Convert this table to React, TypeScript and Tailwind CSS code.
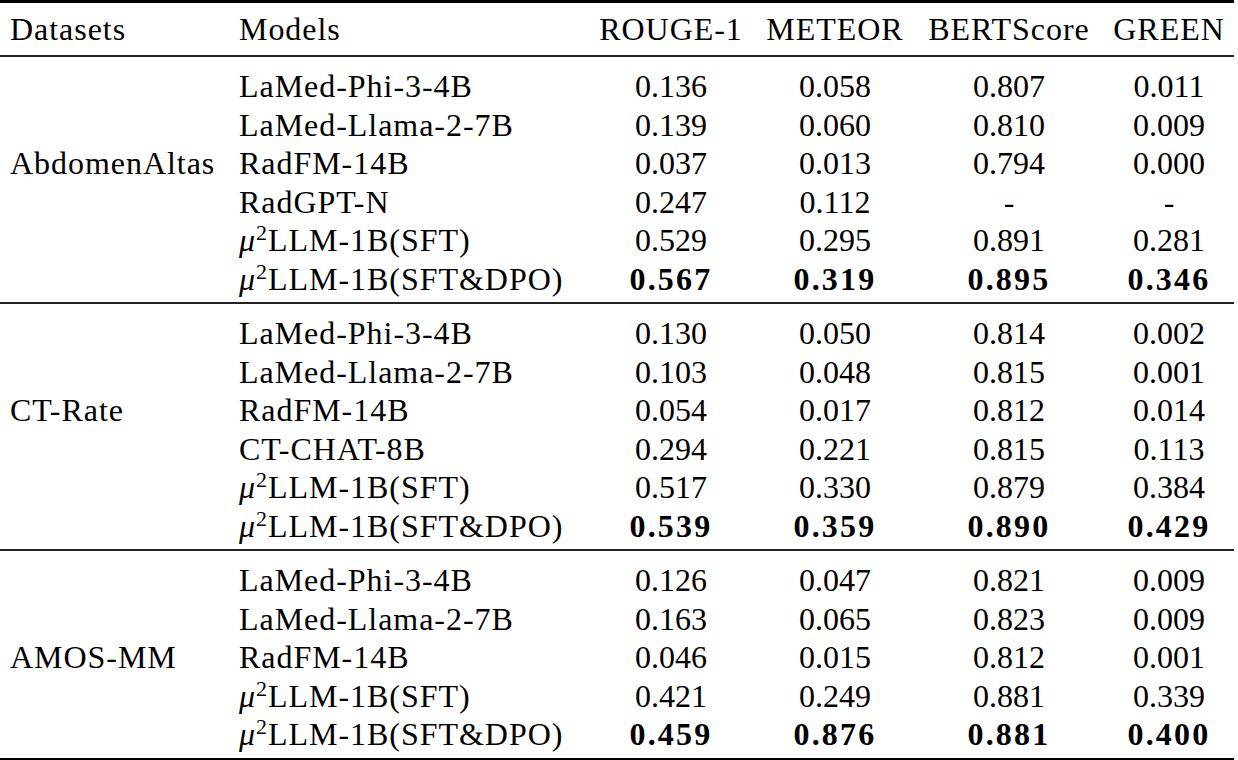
import React from 'react';

type Row = { model: React.ReactNode; vals: string[]; best?: boolean };
type Section = { name: string; rows: Row[] };

const Mu = ({ tag }: { tag: string }) => (
  <span>
    <i>μ</i>
    <sup className="text-[22px]">2</sup>LLM-1B({tag})
  </span>
);

const sections: Section[] = [
  {
    name: 'AbdomenAltas',
    rows: [
      { model: 'LaMed-Phi-3-4B', vals: ['0.136', '0.058', '0.807', '0.011'] },
      { model: 'LaMed-Llama-2-7B', vals: ['0.139', '0.060', '0.810', '0.009'] },
      { model: 'RadFM-14B', vals: ['0.037', '0.013', '0.794', '0.000'] },
      { model: 'RadGPT-N', vals: ['0.247', '0.112', '-', '-'] },
      { model: <Mu tag="SFT" />, vals: ['0.529', '0.295', '0.891', '0.281'] },
      { model: <Mu tag="SFT&DPO" />, vals: ['0.567', '0.319', '0.895', '0.346'], best: true },
    ],
  },
  {
    name: 'CT-Rate',
    rows: [
      { model: 'LaMed-Phi-3-4B', vals: ['0.130', '0.050', '0.814', '0.002'] },
      { model: 'LaMed-Llama-2-7B', vals: ['0.103', '0.048', '0.815', '0.001'] },
      { model: 'RadFM-14B', vals: ['0.054', '0.017', '0.812', '0.014'] },
      { model: 'CT-CHAT-8B', vals: ['0.294', '0.221', '0.815', '0.113'] },
      { model: <Mu tag="SFT" />, vals: ['0.517', '0.330', '0.879', '0.384'] },
      { model: <Mu tag="SFT&DPO" />, vals: ['0.539', '0.359', '0.890', '0.429'], best: true },
    ],
  },
  {
    name: 'AMOS-MM',
    rows: [
      { model: 'LaMed-Phi-3-4B', vals: ['0.126', '0.047', '0.821', '0.009'] },
      { model: 'LaMed-Llama-2-7B', vals: ['0.163', '0.065', '0.823', '0.009'] },
      { model: 'RadFM-14B', vals: ['0.046', '0.015', '0.812', '0.001'] },
      { model: <Mu tag="SFT" />, vals: ['0.421', '0.249', '0.881', '0.339'] },
      { model: <Mu tag="SFT&DPO" />, vals: ['0.459', '0.876', '0.881', '0.400'], best: true },
    ],
  },
];

const cols = 'grid grid-cols-[230px_358px_166px_162px_186px_134px] items-center';

export default function App() {
  return (
    <div
      className="w-[1238px] h-[760px] bg-white text-black text-[32px] leading-none"
      style={{ fontFamily: '"Liberation Serif", "Times New Roman", serif' }}
    >
      <div className="w-[1234px]">
        <div className="h-[3px] bg-black" />
        <div className={`${cols} h-[52px]`}>
          <div className="pl-[10px] tracking-[0.03em]">Datasets</div>
          <div className="pl-[9px] tracking-[0.03em]">Models</div>
          <div className="text-center tracking-[0.03em]">ROUGE-1</div>
          <div className="text-center tracking-[0.03em]">METEOR</div>
          <div className="text-center tracking-[0.03em]">BERTScore</div>
          <div className="text-center tracking-[0.03em]">GREEN</div>
        </div>
        {sections.map((s) => (
          <div key={s.name}>
            <div className="h-[2px] bg-[#222]" />
            <div className="pt-[10px] pb-[4px]">
              {s.rows.map((r, i) => (
                <div key={i} className={`${cols} h-[38.5px]`}>
                  <div className="pl-[10px] tracking-[0.03em]">{i === 2 ? s.name : ''}</div>
                  <div className="pl-[9px] tracking-[0.03em] whitespace-nowrap">{r.model}</div>
                  {r.vals.map((v, j) => (
                    <div
                      key={j}
                      className={r.best ? 'text-center font-bold tracking-[0.07em]' : 'text-center'}
                    >
                      {v}
                    </div>
                  ))}
                </div>
              ))}
            </div>
          </div>
        ))}
        <div className="h-[3px] bg-black" />
      </div>
    </div>
  );
}
